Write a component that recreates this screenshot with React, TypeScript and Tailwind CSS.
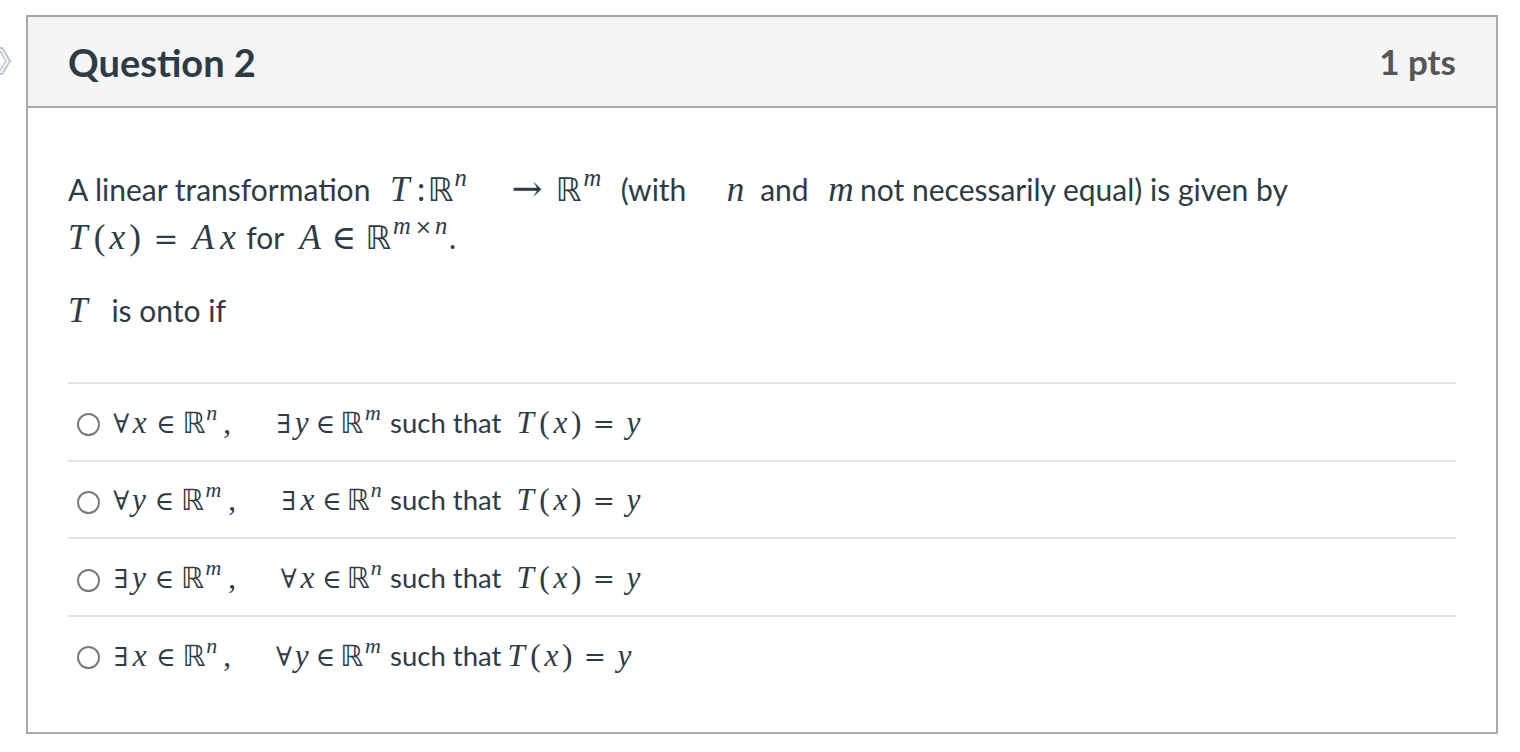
import React from "react";

const IT = "font-['Liberation_Serif',serif] italic text-[0.95em]";
const RM = "font-['Liberation_Serif',serif] text-[0.95em]";
const SY = "font-['DejaVu_Serif',serif] text-[0.8em]";
const SYL = "font-['DejaVu_Serif',serif] text-[0.9em]";
const BB = "font-['DejaVu_Sans',sans-serif] text-[0.88em]";

const B = ({ w, k, c, cls = "" }: { w: string; k: string; c: string; cls?: string }) => (
  <span className={"inline-block text-center " + w + " " + cls}>
    <span className={k}>{c}</span>
  </span>
);

const Sup = ({ children }: { children: React.ReactNode }) => (
  <span className="inline-block relative -top-[0.57em] text-[0.7em]">{children}</span>
);

const Tm = ({ cls = "" }: { cls?: string }) => <B w="w-[0.66em]" k={IT} c="T" cls={"text-left " + cls} />;
const Xm = () => <B w="w-[0.572em]" k={IT} c="x" />;
const Ym = () => <B w="w-[0.526em]" k={IT} c="y" />;
const Am = ({ cls = "" }: { cls?: string }) => <B w="w-[0.75em]" k={IT} c="A" cls={cls} />;
const Nm = () => <B w="w-[0.6em]" k={IT} c="n" />;
const Mm = () => <B w="w-[0.878em]" k={IT} c="m" />;
const Lp = () => <B w="w-[0.389em]" k={RM} c="(" />;
const Rp = () => <B w="w-[0.389em]" k={RM} c=")" />;
const Eq = () => <B w="w-[0.778em]" k={SY} c="=" cls="mx-[0.25em]" />;
const Rr = () => <B w="w-[0.68em]" k={BB} c="ℝ" />;
const Fa = () => <B w="w-[0.556em]" k={SY} c="∀" />;
const Ex = () => <B w="w-[0.556em]" k={SY} c="∃" />;

const Txy = () => (
  <>
    <Tm />
    <Lp />
    <Xm />
    <Rp />
    <Eq />
    <Ym />
  </>
);

const Radio = () => (
  <span className="inline-block w-[23px] h-[23px] rounded-full border-2 border-[#7a7a7a] bg-white shrink-0 mt-[6px]" />
);

const Option = ({ children }: { children: React.ReactNode }) => (
  <div className="flex items-center h-[77.67px] border-t-2 border-[#e2e2e2] pl-[9px]">
    <Radio />
    <div className="ml-[12px] text-[27.5px] leading-none whitespace-nowrap relative -top-[1px]">{children}</div>
  </div>
);

const Opt = ({ q1, v1, q2, v2 }: { q1: "A" | "E"; v1: "x" | "y"; q2: "A" | "E"; v2: "x" | "y" }) => {
  const Q = (q: "A" | "E") => (q === "A" ? <Fa /> : <Ex />);
  const V = (v: "x" | "y") => (v === "x" ? <Xm /> : <Ym />);
  const S = (v: "x" | "y") => (v === "x" ? <Nm /> : <Mm />);
  return (
    <span className="text-[33px] leading-none">
      {Q(q1)}
      {V(v1)}
      <B w="w-[0.667em]" k={SY} c="∈" cls="mx-[0.17em]" />
      <Rr />
      <Sup>{S(v1)}</Sup>
      <B w="w-[0.278em]" k={RM} c="," cls="ml-[0.12em]" />
      <span className="inline-block w-[1.3em]" />
      {Q(q2)}
      {V(v2)}
      <B w="w-[0.667em]" k={SY} c="∈" cls="mx-[0.12em]" />
      <Rr />
      <Sup>{S(v2)}</Sup>
    </span>
  );
};

export default function App() {
  return (
    <div className="relative min-h-[752px] bg-white font-[Lato,'Liberation_Sans',sans-serif] text-[#2d3b45] pt-[15px] pl-[26px]">
      <svg className="absolute left-0 top-[46px]" width="12" height="30" viewBox="0 0 12 30">
        <path d="M-4 2 L2 2 L10 15 L2 28 L-4 28" fill="none" stroke="#b9c6d3" strokeWidth="2" />
        <path d="M-6 5 L0 5 L6 15 L0 25 L-6 25" fill="none" stroke="#b9c6d3" strokeWidth="1.5" />
      </svg>
      <div className="w-[1472px] h-[719px] border-2 border-[#a9a9a9] flex flex-col">
        <div className="h-[91px] bg-[#f5f5f5] border-b-2 border-[#a9a9a9] flex items-center justify-between px-[40px] shrink-0">
          <h2 className="text-[38px] font-bold text-[#2d3b45] leading-none">Question 2</h2>
          <span className="text-[35px] font-bold text-[#565656] leading-none">1 pts</span>
        </div>
        <div className="px-[40px] pt-[57px]">
          <p className="text-[30px] leading-[48px] whitespace-nowrap">
            A linear transformation{" "}
            <span className="text-[37px] leading-none">
              <Tm cls="ml-[12px]" />
              <B w="w-[0.36em]" k={RM} c=":" />
              <Rr />
              <Sup>
                <Nm />
              </Sup>
              <B
                w="w-[1em]"
                k="font-['DejaVu_Serif',serif] text-[1em]"
                c="→"
                cls="ml-[40px] mr-[0.278em]"
              />
              <Rr />
              <Sup>
                <Mm />
              </Sup>
            </span>
            <span className="ml-[17px]">(with</span>
            <span className="text-[37px] leading-none ml-[38px] mr-[6px]">
              <Nm />
            </span>{" "}
            and{" "}
            <span className="text-[37px] leading-none ml-[12px]">
              <B w="w-[0.65em]" k={IT} c="m" />
            </span>{" "}
            not necessarily equal) is given by
            <br />
            <span className="text-[37px] leading-none">
              <Tm />
              <Lp />
              <Xm />
              <Rp />
              <Eq />
              <Am />
              <Xm />
            </span>{" "}
            for{" "}
            <span className="text-[37px] leading-none">
              <Am cls="ml-[5px]" />
              <B w="w-[0.667em]" k={SYL} c="∈" cls="mx-[0.2em]" />
              <span className="inline-block w-[2px]" />
              <Rr />
              <Sup>
                <Mm />
                <B w="w-[0.778em]" k={SY} c="×" />
                <Nm />
              </Sup>
            </span>
            .
          </p>
          <p className="text-[30px] leading-[36px] mt-[28px]">
            <span className="text-[37px] leading-none">
              <Tm />
            </span>
            <span className="ml-[19px]">is onto if</span>
          </p>
          <div className="mt-[54px]">
            <Option>
              <Opt q1="A" v1="x" q2="E" v2="y" />
              <span className="ml-[7px] mr-[15px]">such that</span>
              <span className="text-[33px] leading-none">
                <Txy />
              </span>
            </Option>
            <Option>
              <Opt q1="A" v1="y" q2="E" v2="x" />
              <span className="ml-[7px] mr-[15px]">such that</span>
              <span className="text-[33px] leading-none">
                <Txy />
              </span>
            </Option>
            <Option>
              <Opt q1="E" v1="y" q2="A" v2="x" />
              <span className="ml-[7px] mr-[15px]">such that</span>
              <span className="text-[33px] leading-none">
                <Txy />
              </span>
            </Option>
            <Option>
              <Opt q1="E" v1="x" q2="A" v2="y" />
              <span className="ml-[7px] mr-[6px]">such that</span>
              <span className="text-[33px] leading-none">
                <Txy />
              </span>
            </Option>
          </div>
        </div>
      </div>
    </div>
  );
}
